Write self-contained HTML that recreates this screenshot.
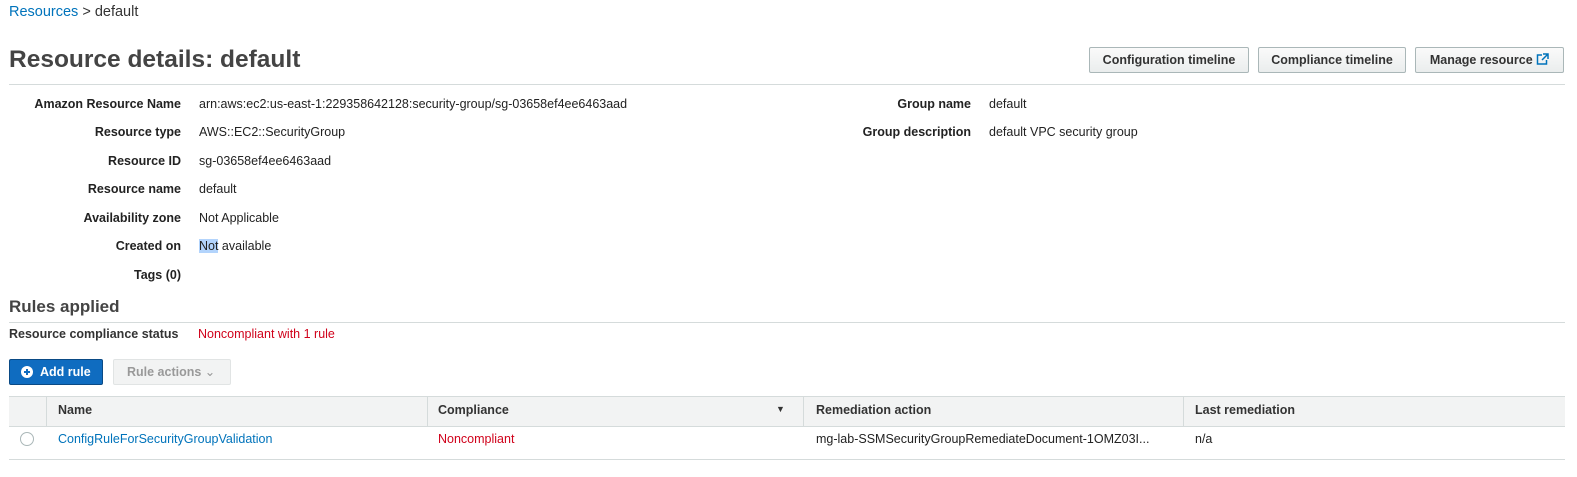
<!DOCTYPE html>
<html><head><style>
body{margin:0;width:1577px;height:477px;background:#fff;font-family:"Liberation Sans",Arial,sans-serif;color:#16191f;position:relative;overflow:hidden;font-size:12.5px}
.a{position:absolute;white-space:nowrap}
.lbl{position:absolute;font-weight:bold;text-align:right;width:200px;font-size:12.5px;color:#222}
.val{position:absolute;font-size:12.5px;color:#222}
.btn{position:absolute;top:47px;height:25px;border:1px solid #aab7b8;border-radius:2px;background:linear-gradient(#fafafa,#eaeded);font-weight:bold;font-size:12.5px;line-height:25px;text-align:center;color:#333;box-sizing:border-box}
.hr{position:absolute;left:9px;width:1556px;height:1px;background:#d5dbdb}
</style></head><body>
<div class="a" style="left:9px;top:4px;font-size:14.5px"><span style="color:#0073bb">Resources</span> <span style="color:#333">&gt; default</span></div>
<div class="a" style="left:9px;top:46px;font-size:24.5px;font-weight:bold;color:#444">Resource details: default</div>
<div class="btn" style="left:1089px;width:160px;height:26px">Configuration timeline</div>
<div class="btn" style="left:1258px;width:148px;height:26px">Compliance timeline</div>
<div class="btn" style="left:1415px;width:149px;height:26px">Manage resource <svg width="13" height="12" viewBox="0 0 13 12" style="vertical-align:-1px"><path d="M6 2H1.5v9h9V7" fill="none" stroke="#0073bb" stroke-width="1.5"/><path d="M7 1h5v5M12 1L6 7" fill="none" stroke="#0073bb" stroke-width="1.5"/></svg></div>
<div class="hr" style="top:84px"></div>

<div class="lbl" style="left:-19px;top:97px">Amazon Resource Name</div><div class="val" style="left:199px;top:97px">arn:aws:ec2:us-east-1:229358642128:security-group/sg-03658ef4ee6463aad</div>
<div class="lbl" style="left:-19px;top:125px">Resource type</div><div class="val" style="left:199px;top:125px">AWS::EC2::SecurityGroup</div>
<div class="lbl" style="left:-19px;top:154px">Resource ID</div><div class="val" style="left:199px;top:154px">sg-03658ef4ee6463aad</div>
<div class="lbl" style="left:-19px;top:182px">Resource name</div><div class="val" style="left:199px;top:182px">default</div>
<div class="lbl" style="left:-19px;top:211px">Availability zone</div><div class="val" style="left:199px;top:211px">Not Applicable</div>
<div class="lbl" style="left:-19px;top:239px">Created on</div><div class="val" style="left:199px;top:239px"><span style="background:#b3d4fc">Not</span> available</div>
<div class="lbl" style="left:-19px;top:268px">Tags (0)</div>
<div class="lbl" style="left:771px;top:97px">Group name</div><div class="val" style="left:989px;top:97px">default</div>
<div class="lbl" style="left:771px;top:125px">Group description</div><div class="val" style="left:989px;top:125px">default VPC security group</div>

<div class="a" style="left:9px;top:297px;font-size:17px;font-weight:bold;color:#444">Rules applied</div>
<div class="hr" style="top:322px"></div>
<div class="a" style="left:9px;top:327px;font-weight:bold;color:#333">Resource compliance status</div>
<div class="a" style="left:198px;top:327px;color:#d0021b">Noncompliant with 1 rule</div>
<div class="a" style="left:9px;top:359px;width:94px;height:26px;background:#0f6cc0;border:1px solid #0a4a85;border-radius:2px;box-sizing:border-box;color:#fff;font-weight:bold;font-size:12.5px;line-height:24px"><svg width="12" height="12" viewBox="0 0 12 12" style="position:absolute;left:11px;top:6px"><circle cx="6" cy="6" r="6" fill="#fff"/><path d="M6 3v6M3 6h6" stroke="#0f6cc0" stroke-width="2"/></svg><span style="position:absolute;left:30px">Add rule</span></div>
<div class="a" style="left:113px;top:359px;width:118px;height:26px;background:#f2f3f3;border:1px solid #e1e4e4;border-radius:2px;box-sizing:border-box;color:#999;font-weight:bold;font-size:12.5px;line-height:24px;padding-left:13px">Rule actions <span style="font-weight:normal">&#8964;</span></div>

<div class="a" style="left:9px;top:396px;width:1556px;height:31px;background:#f2f3f3;border-top:1px solid #d5dbdb;border-bottom:1px solid #d5dbdb;box-sizing:border-box"></div>
<div class="a" style="left:46px;top:397px;width:1px;height:29px;background:#d5dbdb"></div>
<div class="a" style="left:427px;top:397px;width:1px;height:29px;background:#d5dbdb"></div>
<div class="a" style="left:803px;top:397px;width:1px;height:29px;background:#d5dbdb"></div>
<div class="a" style="left:1183px;top:397px;width:1px;height:29px;background:#d5dbdb"></div>
<div class="a" style="left:58px;top:403px;font-weight:bold;color:#333">Name</div>
<div class="a" style="left:438px;top:403px;font-weight:bold;color:#333">Compliance</div>
<div class="a" style="left:776px;top:404px;font-size:9px;color:#333">&#9660;</div>
<div class="a" style="left:816px;top:403px;font-weight:bold;color:#333">Remediation action</div>
<div class="a" style="left:1195px;top:403px;font-weight:bold;color:#333">Last remediation</div>
<div class="a" style="left:20px;top:432px;width:14px;height:14px;border:1px solid #aab7b8;border-radius:50%;box-sizing:border-box"></div>
<div class="a" style="left:58px;top:432px;color:#0073bb">ConfigRuleForSecurityGroupValidation</div>
<div class="a" style="left:438px;top:432px;color:#d0021b">Noncompliant</div>
<div class="a" style="left:816px;top:432px;color:#222">mg-lab-SSMSecurityGroupRemediateDocument-1OMZ03I...</div>
<div class="a" style="left:1195px;top:432px;color:#222">n/a</div>
<div class="hr" style="top:459px"></div>
</body></html>
